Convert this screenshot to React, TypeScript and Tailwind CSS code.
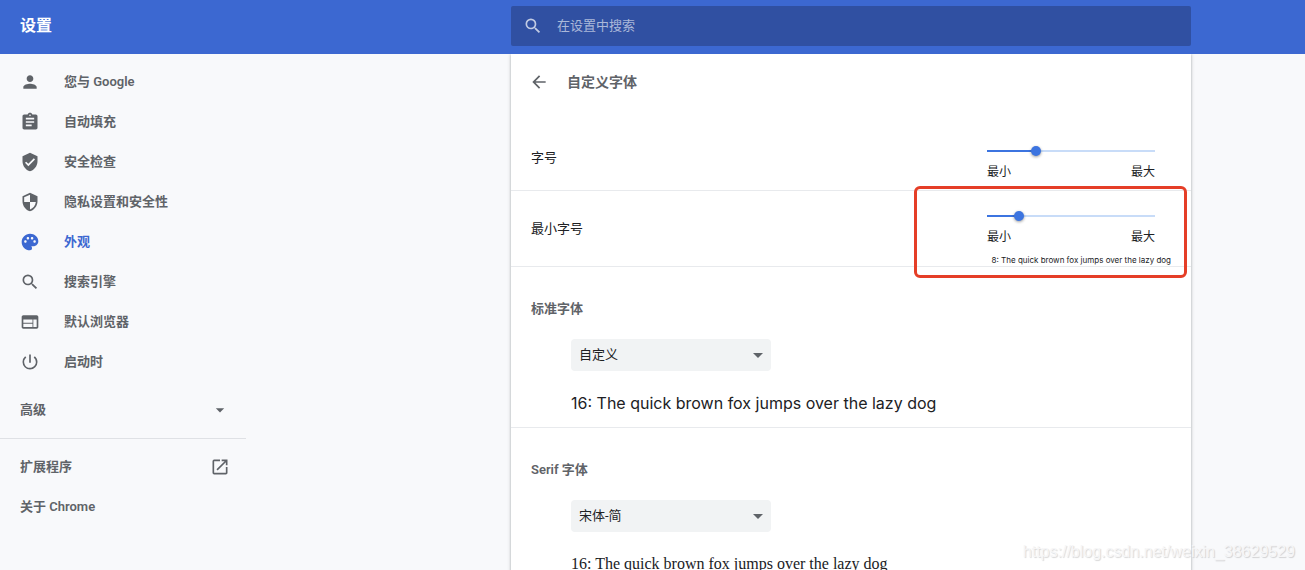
import { useState } from "react";
import type { ReactNode } from "react";
import type { IconType } from "react-icons";
import {
  MdArrowBack,
  MdArrowDropDown,
  MdAssignment,
  MdOpenInNew,
  MdPalette,
  MdPerson,
  MdPowerSettingsNew,
  MdSearch,
  MdSecurity,
  MdVerifiedUser,
  MdWeb,
} from "react-icons/md";
import clsx from "clsx";

interface NavItem {
  label: string;
  icon: IconType;
  active?: boolean;
}

const NAV_ITEMS: NavItem[] = [
  { label: "您与 Google", icon: MdPerson },
  { label: "自动填充", icon: MdAssignment },
  { label: "安全检查", icon: MdVerifiedUser },
  { label: "隐私设置和安全性", icon: MdSecurity },
  { label: "外观", icon: MdPalette, active: true },
  { label: "搜索引擎", icon: MdSearch },
  { label: "默认浏览器", icon: MdWeb },
  { label: "启动时", icon: MdPowerSettingsNew },
];

const SAMPLE = "The quick brown fox jumps over the lazy dog";

const Header = () => (
  <header className="grid shrink-0 grid-cols-[minmax(266px,1fr)_minmax(0,680px)_114px] items-center bg-[#3c68d1] pt-1.5 pb-2">
    <h1 className="pl-5 text-base font-semibold text-white">设置</h1>
    <label className="flex h-10 items-center gap-3.5 rounded-xs bg-[#3050a2] pl-3 text-white/70">
      <MdSearch className="size-5 shrink-0" />
      <input
        type="search"
        aria-label="在设置中搜索"
        placeholder="在设置中搜索"
        className="min-w-0 flex-1 bg-transparent text-[13px] outline-none placeholder:text-white/60"
      />
    </label>
  </header>
);

const Sidebar = () => (
  <nav className="w-[246px] pt-2 font-semibold text-[#5f6368]">
    {NAV_ITEMS.map(({ label, icon: Icon, active }) => (
      <a
        key={label}
        href="#"
        className={clsx("flex h-10 items-center gap-6 pl-5", active && "text-[#3c68d1]")}
      >
        <Icon className="size-5" />
        {label}
      </a>
    ))}
    <button type="button" className="my-2 flex h-10 w-full items-center justify-between pr-4 pl-5">
      高级
      <MdArrowDropDown className="size-5" />
    </button>
    <hr className="mb-2 border-[#dfe1e5]" />
    <a href="#" className="flex h-10 items-center justify-between pr-4 pl-5">
      扩展程序
      <MdOpenInNew className="size-5" />
    </a>
    <a href="#" className="flex h-10 items-center pl-5">
      关于 Chrome
    </a>
  </nav>
);

const SizeSlider = ({ id, initial }: { id: string; initial: number }) => {
  const [value, setValue] = useState(initial);

  return (
    <div className="mr-4 w-[168px]">
      <input
        id={id}
        type="range"
        value={value}
        onChange={(e) => setValue(Number(e.target.value))}
        className="block h-3 w-full appearance-none bg-[length:100%_2px] bg-center bg-no-repeat [&::-webkit-slider-thumb]:size-2.5 [&::-webkit-slider-thumb]:appearance-none [&::-webkit-slider-thumb]:rounded-full [&::-webkit-slider-thumb]:bg-[#3c74e0] [&::-webkit-slider-thumb]:shadow-[0_1px_3px_rgba(0,0,0,0.4)]"
        style={{
          backgroundImage: `linear-gradient(to right, #3c74e0 ${value}%, #c8dcf8 ${value}%)`,
        }}
      />
      <div className="mt-1.5 flex justify-between text-xs leading-[18px]">
        <span>最小</span>
        <span>最大</span>
      </div>
    </div>
  );
};

const SliderRow = ({ id, label, initial, children }: {
  id: string;
  label: string;
  initial: number;
  children?: ReactNode;
}) => (
  <div className="relative flex items-center justify-between border-b border-[#e8eaed] px-5">
    <label htmlFor={id}>{label}</label>
    <div className="flex flex-col items-end pt-[19px]">
      <SizeSlider id={id} initial={initial} />
      {children}
    </div>
  </div>
);

const FontSection = ({ title, options, sampleClass }: {
  title: string;
  options: string[];
  sampleClass: string;
}) => (
  <section className="border-b border-[#e8eaed] px-5 pt-8 pb-3">
    <h3 className="leading-5 font-semibold text-[#5f6368]">{title}</h3>
    <div className="pl-10">
      <div className="relative mt-5 w-[200px]">
        <select
          aria-label={title}
          className="h-8 w-full appearance-none rounded bg-[#f1f3f4] pr-8 pl-2 outline-none"
        >
          {options.map((option) => (
            <option key={option}>{option}</option>
          ))}
        </select>
        <MdArrowDropDown className="pointer-events-none absolute top-1 right-px size-6 text-[#5f6368]" />
      </div>
      <p className={clsx("mt-5 leading-6", sampleClass)}>16: {SAMPLE}</p>
    </div>
  </section>
);

export default function App() {
  return (
    <div className="relative flex h-screen flex-col bg-[#f8f9fb] font-[Roboto,'Noto_Sans_CJK_SC',sans-serif] text-[13px] text-[#202124]">
      <Header />
      <div className="grid min-h-0 flex-1 grid-cols-[minmax(266px,1fr)_minmax(0,680px)_114px] overflow-y-auto [scrollbar-width:none]">
        <Sidebar />
        <main className="h-fit min-h-full bg-white shadow-[0_1px_2px_rgba(60,64,67,0.3),0_1px_3px_1px_rgba(60,64,67,0.15)]">
          <div className="flex h-14 items-center gap-4.5 pl-4.5">
            <button type="button" aria-label="返回">
              <MdArrowBack className="size-5 text-[#5f6368]" />
            </button>
            <h2 className="text-sm font-semibold text-[#5f6368]">自定义字体</h2>
          </div>

          <div className="pt-4">
            <SliderRow id="font-size" label="字号" initial={28}>
              <div className="h-[9px]" />
            </SliderRow>
            <SliderRow id="min-font-size" label="最小字号" initial={17}>
              <p className="mt-2 font-[Inter,sans-serif] text-[8px] leading-3">8: {SAMPLE}</p>
              <div className="pointer-events-none absolute -top-[5px] right-1 -bottom-3 w-[273px] rounded-md border-3 border-[#e53e27]" />
            </SliderRow>
          </div>

          <FontSection
            title="标准字体"
            options={["自定义", "苹方-简"]}
            sampleClass="font-[Inter,sans-serif] text-base"
          />
          <FontSection
            title="Serif 字体"
            options={["宋体-简", "Times"]}
            sampleClass="font-['Liberation_Serif',serif] text-base"
          />
        </main>
      </div>
      <p className="pointer-events-none absolute right-2.5 bottom-1.5 font-['Liberation_Sans',sans-serif] text-base text-[#f6f6f7] [text-shadow:1px_1px_1px_rgba(0,0,0,0.16)]">
        https://blog.csdn.net/weixin_38629529
      </p>
    </div>
  );
}
